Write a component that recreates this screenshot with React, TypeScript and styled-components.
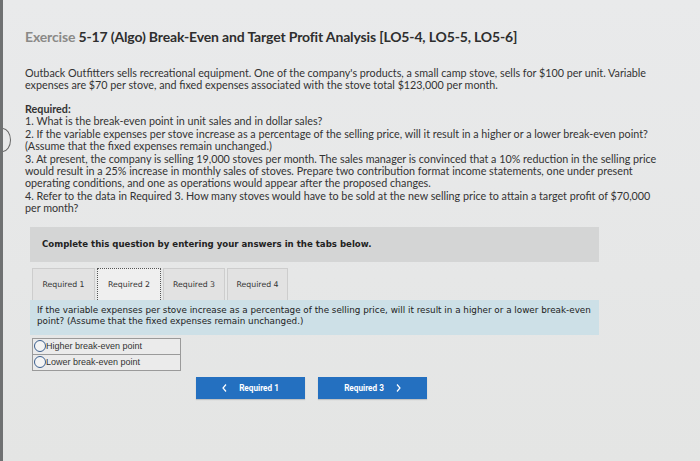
import React from 'react';
import styled, { createGlobalStyle } from 'styled-components';

const GlobalStyle = createGlobalStyle`
    html, body {
        margin: 0;
        padding: 0;
        background: #e7e8e8;
    }
`;

const Screen = styled.main`
    position: relative;
    box-sizing: border-box;
    width: 700px;
    height: 461px;
    overflow: hidden;
    padding: 28px 0 0 22px;
    border-left: 3px solid #6f7172;
    background: linear-gradient(180deg, #e9eaeb 0%, #e6e7e7 60%, #e4e5e4 100%);
    font-family: Lato, "Open Sans", sans-serif;
    color: #2c2c2c;
`;

const BezelDot = styled.div`
    position: absolute;
    left: -9px;
    top: 128px;
    width: 15px;
    height: 22px;
    border: 1px solid #666;
    border-radius: 50%;
`;

const Title = styled.h1`
    margin: 0;
    font-size: 14px;
    line-height: 18px;
    font-weight: 700;
    color: #2e2e2e;
    letter-spacing: -0.15px;
`;

const Faded = styled.span`
    color: #8a8987;
`;

const Paragraph = styled.p`
    margin: 21px 0 0 0;
    font-size: 10.75px;
    line-height: 11.5px;
    width: 638px;
    color: #333;
`;

const Required = styled.div`
    margin-top: 13px;
    font-size: 10.75px;
    line-height: 12.4px;
    width: 638px;
    color: #333;
`;

const RequiredHead = styled.div`
    font-weight: 700;
`;

const Question = styled.section`
    margin: 12px 0 0 5px;
    width: 569px;
    font-family: "DejaVu Sans", Verdana, sans-serif;
`;

const Instructions = styled.div`
    box-sizing: border-box;
    height: 35px;
    padding: 0 12px;
    display: flex;
    align-items: center;
    background: #d4d5d5;
    font-size: 8.6px;
    font-weight: 700;
    color: #222;
`;

const TabRow = styled.div`
    display: flex;
    gap: 2px;
    margin: 6px 0 0 2px;
`;

const Tab = styled.div<{ $active?: boolean; $w: number }>`
    box-sizing: border-box;
    width: ${p => p.$w}px;
    height: 32px;
    display: flex;
    align-items: center;
    justify-content: center;
    font-size: 7.8px;
    color: #333;
    background: ${p => (p.$active ? '#efefef' : '#e2e2e2')};
    border: ${p => (p.$active ? '1px dotted #555' : '1px solid #cdcdcd')};
    border-bottom: none;
`;

const Prompt = styled.div`
    box-sizing: border-box;
    height: 35px;
    padding: 5px 7px 0;
    background: #cde0e7;
    font-size: 8.8px;
    line-height: 11.5px;
    color: #222;
`;

const Choices = styled.div`
    margin: 3px 0 0 2px;
    width: 147px;
    border: 1px solid #9a9a9a;
    background: #ebebeb;
`;

const Choice = styled.label`
    display: flex;
    align-items: center;
    height: 15px;
    font-family: "Liberation Sans", Arial, sans-serif;
    font-size: 9px;
    color: #333;
    & + & {
        border-top: 1px solid #9a9a9a;
    }
`;

const Radio = styled.span`
    box-sizing: border-box;
    width: 12px;
    height: 12px;
    margin: 0 0 0 1px;
    border: 1px solid #3b5f8e;
    border-radius: 50%;
    background: #f4f4f4;
`;

const Nav = styled.div`
    display: flex;
    justify-content: center;
    gap: 13px;
    margin: 6px 0 0 -6px;
`;

const NavButton = styled.button`
    width: 109px;
    height: 22px;
    display: flex;
    align-items: center;
    justify-content: center;
    gap: 12px;
    border: none;
    background: #2470c0;
    color: #fff;
    font-family: Roboto, "Liberation Sans", sans-serif;
    font-size: 8.2px;
    font-weight: 700;
    box-shadow: 0 1px 1px rgba(0, 0, 0, 0.15);
`;

const Chevron = ({ dir }: { dir: 'left' | 'right' }) => (
    <svg width="5" height="8" viewBox="0 0 5 8">
        <path
            d={dir === 'left' ? 'M4 0.5 L1 4 L4 7.5' : 'M1 0.5 L4 4 L1 7.5'}
            fill="none"
            stroke="#fff"
            strokeWidth="1.2"
        />
    </svg>
);

const tabs = [
    { label: 'Required 1', w: 63 },
    { label: 'Required 2', w: 64, active: true },
    { label: 'Required 3', w: 62 },
    { label: 'Required 4', w: 61 },
];

const App = () => {
    return (
        <>
            <GlobalStyle />
            <Screen>
                <BezelDot />
                <Title>
                    <Faded>Exercise</Faded> 5-17 (Algo) Break-Even and Target Profit Analysis [LO5-4, LO5-5, LO5-6]
                </Title>
                <Paragraph>
                    Outback Outfitters sells recreational equipment. One of the company's products, a small camp stove, sells for $100 per unit. Variable expenses are $70 per stove, and fixed expenses associated with the stove total $123,000 per month.
                </Paragraph>
                <Required>
                    <RequiredHead>Required:</RequiredHead>
                    <div>1. What is the break-even point in unit sales and in dollar sales?</div>
                    <div>2. If the variable expenses per stove increase as a percentage of the selling price, will it result in a higher or a lower break-even point? (Assume that the fixed expenses remain unchanged.)</div>
                    <div>3. At present, the company is selling 19,000 stoves per month. The sales manager is convinced that a 10% reduction in the selling price would result in a 25% increase in monthly sales of stoves. Prepare two contribution format income statements, one under present operating conditions, and one as operations would appear after the proposed changes.</div>
                    <div>4. Refer to the data in Required 3. How many stoves would have to be sold at the new selling price to attain a target profit of $70,000 per month?</div>
                </Required>
                <Question>
                    <Instructions>Complete this question by entering your answers in the tabs below.</Instructions>
                    <TabRow>
                        {tabs.map(t => (
                            <Tab key={t.label} $w={t.w} $active={t.active}>{t.label}</Tab>
                        ))}
                    </TabRow>
                    <Prompt>
                        If the variable expenses per stove increase as a percentage of the selling price, will it result in a higher or a lower break-even point? (Assume that the fixed expenses remain unchanged.)
                    </Prompt>
                    <Choices>
                        <Choice><Radio />Higher break-even point</Choice>
                        <Choice><Radio />Lower break-even point</Choice>
                    </Choices>
                    <Nav>
                        <NavButton><Chevron dir="left" />Required 1</NavButton>
                        <NavButton>Required 3<Chevron dir="right" /></NavButton>
                    </Nav>
                </Question>
            </Screen>
        </>
    );
};

export default App;
